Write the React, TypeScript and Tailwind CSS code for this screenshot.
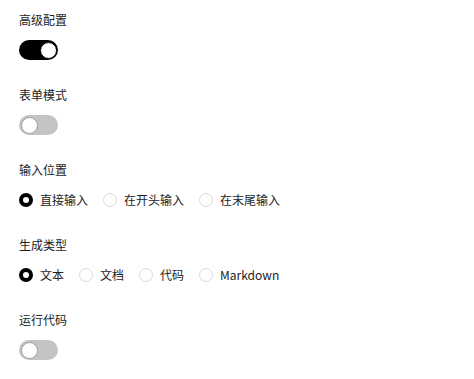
import { useState } from "react";

type Option = { value: string; label: string };

function Toggle({ checked, onChange }: { checked: boolean; onChange: (v: boolean) => void }) {
  return (
    <button
      type="button"
      onClick={() => onChange(!checked)}
      className={`flex items-center w-[39px] h-5 rounded-full p-[1.5px] ${
        checked ? "bg-black justify-end" : "bg-[#c4c4c4] justify-start"
      }`}
    >
      <span
        className={`block w-[17px] h-[17px] rounded-full bg-white border ${
          checked ? "border-black" : "border-[#9e9e9e]"
        }`}
      />
    </button>
  );
}

function RadioGroup({
  options,
  value,
  onChange,
}: {
  options: Option[];
  value: string;
  onChange: (v: string) => void;
}) {
  return (
    <div className="flex items-center h-5 gap-[15px]">
      {options.map((opt) => (
        <label
          key={opt.value}
          className="flex items-center gap-[7px] cursor-pointer"
          onClick={() => onChange(opt.value)}
        >
          <span
            className={`block w-[14px] h-[14px] rounded-full bg-white ${
              value === opt.value ? "border-[4.5px] border-black" : "border border-[#dcdcdc]"
            }`}
          />
          <span className="text-[12px] leading-5 text-[#222]">{opt.label}</span>
        </label>
      ))}
    </div>
  );
}

function Section({ label, children }: { label: string; children: React.ReactNode }) {
  return (
    <div className="mb-[25px]">
      <div className="text-[12px] leading-5 text-[#222] mb-[10px]">{label}</div>
      {children}
    </div>
  );
}

export default function App() {
  const [advanced, setAdvanced] = useState(true);
  const [formMode, setFormMode] = useState(false);
  const [position, setPosition] = useState("direct");
  const [genType, setGenType] = useState("text");
  const [runCode, setRunCode] = useState(false);

  return (
    <div
      className="bg-white min-h-screen pt-[10px] pl-[19px]"
      style={{ fontFamily: '"Noto Sans CJK SC", "Noto Sans", sans-serif' }}
    >
      <Section label="高级配置">
        <Toggle checked={advanced} onChange={setAdvanced} />
      </Section>
      <Section label="表单模式">
        <Toggle checked={formMode} onChange={setFormMode} />
      </Section>
      <Section label="输入位置">
        <RadioGroup
          value={position}
          onChange={setPosition}
          options={[
            { value: "direct", label: "直接输入" },
            { value: "start", label: "在开头输入" },
            { value: "end", label: "在末尾输入" },
          ]}
        />
      </Section>
      <Section label="生成类型">
        <RadioGroup
          value={genType}
          onChange={setGenType}
          options={[
            { value: "text", label: "文本" },
            { value: "doc", label: "文档" },
            { value: "code", label: "代码" },
            { value: "markdown", label: "Markdown" },
          ]}
        />
      </Section>
      <Section label="运行代码">
        <Toggle checked={runCode} onChange={setRunCode} />
      </Section>
    </div>
  );
}
